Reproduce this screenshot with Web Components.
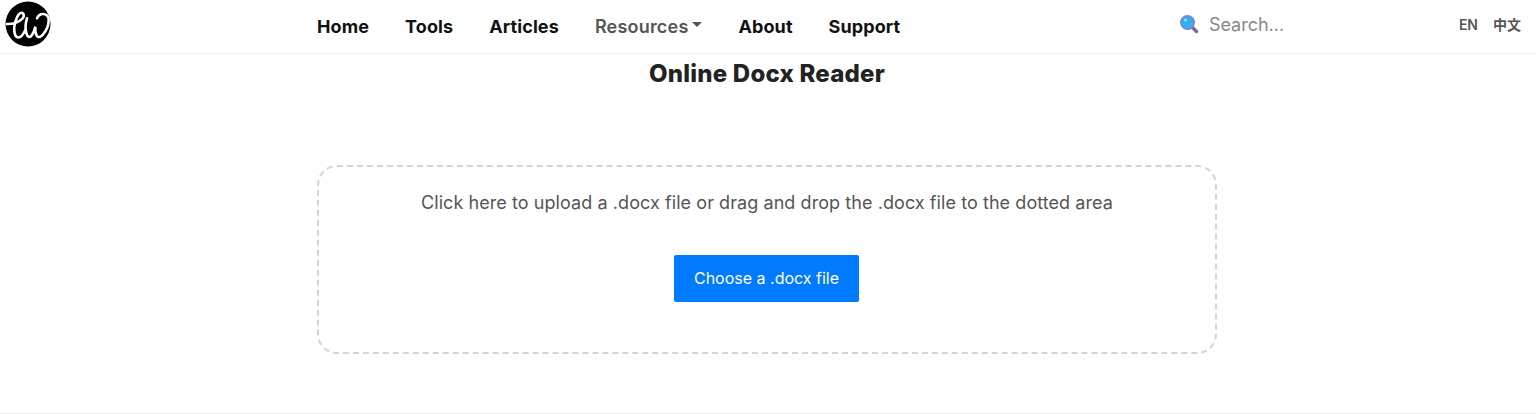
<!DOCTYPE html>
<html lang="en">
<head>
<meta charset="utf-8">
<title>Online Docx Reader</title>
<style>
    html, body { margin: 0; padding: 0; background: #fff; height: 414px; overflow: hidden; }
    body { font-family: Inter, "Noto Sans CJK SC", sans-serif; }
</style>
</head>
<body>
<site-page>
    <site-nav></site-nav>
    <upload-area title-text="Online Docx Reader"></upload-area>
</site-page>

<script>
class sitePage extends HTMLElement {
    constructor() {
        super();
        this.attachShadow({mode: 'open'});
        this.shadowRoot.innerHTML = `
            <style>
                :host {
                    display: flex;
                    flex-direction: column;
                    height: 414px;
                    box-sizing: border-box;
                    border-bottom: 1px solid #eeeeee;
                }
            </style>
            <slot></slot>
        `;
    }
}

class siteNav extends HTMLElement {
    constructor() {
        super();
        this.attachShadow({mode: 'open'});
        this.shadowRoot.innerHTML = `
            <style>
                :host {
                    display: flex;
                    align-items: center;
                    box-sizing: border-box;
                    height: 54px;
                    padding: 0 15px 0 5px;
                    border-bottom: 1px solid #f0f0f0;
                    font-family: Inter, "Noto Sans CJK SC", sans-serif;
                }
                .logo { width: 46px; height: 46px; flex: none; margin-top: -6px; }
                .menu {
                    display: flex;
                    gap: 36px;
                    margin-left: 266px;
                    margin-top: -1px;
                    font-size: 18px;
                    font-weight: 700;
                    letter-spacing: 0.1px;
                    color: #111;
                    white-space: nowrap;
                }
                .menu .drop { color: #555; font-weight: 600; letter-spacing: 0.2px; display: flex; align-items: center; gap: 4px; }
                .caret {
                    width: 0;
                    height: 0;
                    border-top: 5px solid #555;
                    border-left: 5px solid transparent;
                    border-right: 5px solid transparent;
                    margin-top: -3px;
                }
                .search {
                    display: flex;
                    align-items: center;
                    gap: 10px;
                    margin-left: auto;
                    margin-top: -5px;
                    width: 280px;
                    font-size: 18px;
                    color: #888;
                }
                .search svg { width: 20px; height: 20px; flex: none; }
                .lang {
                    display: flex;
                    align-items: center;
                    gap: 15px;
                    margin-top: -3px;
                    font-size: 14px;
                    line-height: 16px;
                    font-weight: 600;
                    color: #555;
                }
                .lang span { display: block; height: 16px; }
                .lang .zh { font-weight: 700; }
            </style>
            <svg class="logo" viewBox="0 0 46 46">
                <circle cx="23" cy="23" r="22.5" fill="#000"/>
                <path d="M2 23C8 23.2 14 21 17.7 17.3C19.5 15 19 11.7 16.3 11.7C13 12 10 20 9.3 25.7C8.8 31 10 36.5 13.5 36.5C16 36.5 18.5 33 20.3 29" fill="none" stroke="#fff" stroke-width="2.6" stroke-linecap="round"/>
                <path d="M22 17.3C20.5 22 20 28 21.5 32.5C22.5 36.5 25 37 27 34C28.5 31.5 29.8 28 30.3 25.7C30 29 30.6 33 32 35.2C33.5 36.8 36 36 38 33.5C41 30 43.7 24 43.7 19C43.7 15 41 13 38 13C35 13 33 15 32 17.3" fill="none" stroke="#fff" stroke-width="2.6" stroke-linecap="round"/>
            </svg>
            <div class="menu">
                <span>Home</span>
                <span>Tools</span>
                <span>Articles</span>
                <span class="drop">Resources<i class="caret"></i></span>
                <span>About</span>
                <span>Support</span>
            </div>
            <div class="search">
                <svg viewBox="0 0 20 20">
                    <path d="M12.5 12.5L17.5 17.5" stroke="#7b68a8" stroke-width="3.4" stroke-linecap="round"/>
                    <circle cx="8.5" cy="8.5" r="7.5" fill="#8a7cc0"/>
                    <circle cx="8.5" cy="8.5" r="6.2" fill="#35aef0"/>
                    <circle cx="6.5" cy="6" r="1.6" fill="#8fd8fa"/>
                </svg>
                <span>Search...</span>
            </div>
            <div class="lang"><span>EN</span><span class="zh">中文</span></div>
        `;
    }
}

class uploadArea extends HTMLElement {
    constructor() {
        super();
        this.attachShadow({mode: 'open'});
        this.shadowRoot.innerHTML = `
            <style>
                :host {
                    display: flex;
                    flex-direction: column;
                    align-items: center;
                    padding-right: 2px;
                    font-family: Inter, sans-serif;
                }
                h1 {
                    margin: 4px 0 0;
                    font-size: 24px;
                    line-height: 32px;
                    font-weight: 800;
                    letter-spacing: 0.22px;
                    color: #222;
                }
                .drop {
                    display: flex;
                    flex-direction: column;
                    align-items: center;
                    box-sizing: border-box;
                    width: 900px;
                    height: 189px;
                    margin-top: 75px;
                    padding-top: 24px;
                    border: 2px dashed #d4d4d4;
                    border-radius: 20px;
                }
                p {
                    margin: 0;
                    font-size: 18px;
                    line-height: 24px;
                    letter-spacing: 0.07px;
                    color: #555;
                }
                button {
                    width: 185px;
                    height: 47px;
                    margin: 40px 2px 0 0;
                    padding: 0 0 2px 1px;
                    border: 0;
                    border-radius: 2px;
                    background: #007bff;
                    color: #fff;
                    font: 400 16px Inter, sans-serif;
                }
            </style>
            <h1 id="titulo"></h1>
            <div class="drop">
                <p>Click here to upload a .docx file or drag and drop the .docx file to the dotted area</p>
                <button type="button">Choose a .docx file</button>
            </div>
        `;
    }

    connectedCallback() {
        this.shadowRoot.getElementById('titulo').innerText = this.getAttribute('title-text');
    }
}

window.customElements.define("site-page", sitePage);
window.customElements.define("site-nav", siteNav);
window.customElements.define("upload-area", uploadArea);
</script>
</body>
</html>
